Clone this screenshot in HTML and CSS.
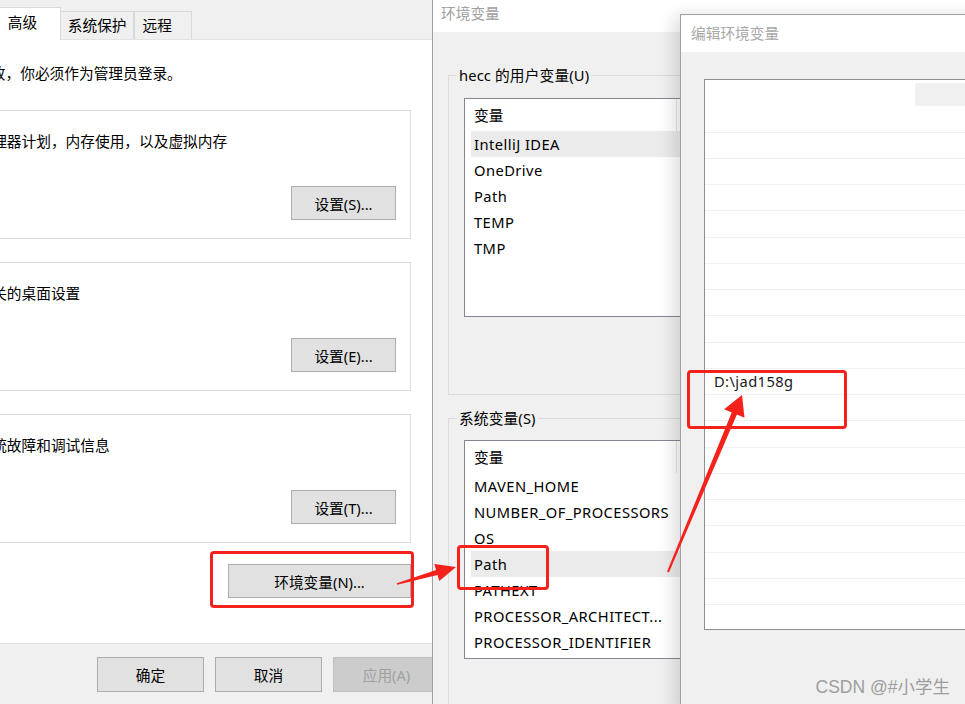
FILE: index.html
```html
<!DOCTYPE html>
<html lang="zh-CN">
<head>
    <meta charset="UTF-8">
    <title>环境变量</title>
    <link rel="stylesheet" href="styles.css">
</head>
<body>
    <!-- 系统属性 -->
    <div class="win sysprop">
        <div class="tabbar">
            <div class="tab">计算机名</div>
            <div class="tab">硬件</div>
            <div class="tab active">高级</div>
            <div class="tab">系统保护</div>
            <div class="tab">远程</div>
        </div>
        <div class="page">
            <p class="note">要进行大多数更改，你必须作为管理员登录。</p>
            <div class="group">
                <div class="group-text">视觉效果，处理器计划，内存使用，以及虚拟内存</div>
                <button class="btn btn-set">设置(S)...</button>
            </div>
            <div class="group">
                <div class="group-text">与登录帐户相关的桌面设置</div>
                <button class="btn btn-set">设置(E)...</button>
            </div>
            <div class="group">
                <div class="group-text">系统启动、系统故障和调试信息</div>
                <button class="btn btn-set">设置(T)...</button>
            </div>
            <button class="btn btn-env">环境变量(N)...</button>
        </div>
        <div class="footer">
            <button class="btn btn-wide">确定</button>
            <button class="btn btn-wide">取消</button>
            <button class="btn btn-wide" disabled>应用(A)</button>
        </div>
    </div>

    <!-- 环境变量 -->
    <div class="win envwin">
        <div class="titlebar">环境变量</div>
        <div class="env-body">
            <fieldset class="vars">
                <legend>hecc 的用户变量(U)</legend>
                <div class="list">
                    <div class="list-head"><span class="col">变量</span></div>
                    <div class="list-row sel">IntelliJ IDEA</div>
                    <div class="list-row">OneDrive</div>
                    <div class="list-row">Path</div>
                    <div class="list-row">TEMP</div>
                    <div class="list-row">TMP</div>
                </div>
            </fieldset>
            <fieldset class="vars vars-sys">
                <legend>系统变量(S)</legend>
                <div class="list">
                    <div class="list-head"><span class="col">变量</span></div>
                    <div class="list-row">MAVEN_HOME</div>
                    <div class="list-row">NUMBER_OF_PROCESSORS</div>
                    <div class="list-row">OS</div>
                    <div class="list-row sel">Path</div>
                    <div class="list-row">PATHEXT</div>
                    <div class="list-row">PROCESSOR_ARCHITECT...</div>
                    <div class="list-row">PROCESSOR_IDENTIFIER</div>
                </div>
            </fieldset>
        </div>
    </div>

    <!-- 编辑环境变量 -->
    <div class="win editwin">
        <div class="titlebar">编辑环境变量</div>
        <div class="edit-body">
            <div class="path-list">
                <div class="path-row editing"><span class="edit-box"></span><span class="edit-fill"></span></div>
                <div class="path-row"></div>
                <div class="path-row"></div>
                <div class="path-row"></div>
                <div class="path-row"></div>
                <div class="path-row"></div>
                <div class="path-row"></div>
                <div class="path-row"></div>
                <div class="path-row"></div>
                <div class="path-row"></div>
                <div class="path-row"></div>
                <div class="path-row">D:\jad158g</div>
                <div class="path-row"></div>
                <div class="path-row"></div>
                <div class="path-row"></div>
                <div class="path-row"></div>
                <div class="path-row"></div>
                <div class="path-row"></div>
                <div class="path-row"></div>
                <div class="path-row"></div>
                <div class="path-row"></div>
            </div>
        </div>
    </div>

    <!-- 标注 -->
    <div class="mark mark-env"></div>
    <div class="mark mark-path"></div>
    <div class="mark mark-value"></div>
    <svg class="arrows" width="965" height="704" viewBox="0 0 965 704">
        <polygon points="396.8,583.2 436.1,570.1 434.3,563.9 456,567 439.3,581.1 437.5,574.9 397.2,584.8"/>
        <polygon points="667.1,571.6 731.7,412.4 724.1,409.3 742,395 744.5,417.7 736.9,414.6 668.9,572.4"/>
    </svg>

    <div class="watermark">CSDN @#小学生</div>
</body>
</html>
```

FILE: styles.css
```css
* {
    box-sizing: border-box;
}

body {
    margin: 0;
    width: 965px;
    height: 704px;
    overflow: hidden;
    position: relative;
    background-color: #ffffff;
    font-family: "Noto Sans", "Noto Sans CJK SC", sans-serif;
    font-size: 14.7px;
    color: #000;
}

.win {
    position: absolute;
    display: flex;
    flex-direction: column;
}

/* 系统属性窗口 */
.sysprop {
    left: -134px;
    top: 0;
    width: 588px;
    height: 704px;
    background-color: #ffffff;
}

.tabbar {
    height: 40px;
    flex: none;
    display: flex;
    align-items: flex-end;
    padding-left: 2px;
    background-color: #f0f0f0;
    border-bottom: 1px solid #e3e3e3;
}

.tab {
    min-width: 58px;
    height: 28px;
    line-height: 27px;
    padding: 0 6px 0 8px;
    border: 1px solid #d9d9d9;
    border-bottom: none;
    white-space: nowrap;
}

.tab.active {
    min-width: 62px;
    height: 33px;
    line-height: 29px;
    margin: 0 -2px -1px;
    background-color: #ffffff;
    position: relative;
}

.page {
    flex: 1;
    display: flex;
    flex-direction: column;
    padding: 23px 43px 0 22px;
}

.note {
    margin: 0;
    line-height: 20px;
    white-space: nowrap;
}

.group {
    height: 129px;
    margin-top: 27px;
    display: flex;
    flex-direction: column;
    padding: 20px 14px 0 15px;
    border: 1px solid #dcdcdc;
}

.group + .group {
    margin-top: 23px;
}

.group-text {
    line-height: 20px;
    white-space: nowrap;
}

.btn {
    font: inherit;
    color: #000;
    background-color: #e1e1e1;
    border: 1px solid #adadad;
    padding: 0;
}

.btn:disabled {
    background-color: #cccccc;
    border-color: #bfbfbf;
    color: #a0a0a0;
}

.btn-set {
    align-self: flex-end;
    width: 105px;
    height: 34px;
    margin-top: 35px;
}

.btn-env {
    align-self: flex-end;
    width: 183px;
    height: 34px;
    margin-top: 21px;
}

.footer {
    height: 61px;
    flex: none;
    display: flex;
    justify-content: flex-end;
    gap: 11px;
    padding: 13px 14px 0 0;
    background-color: #f0f0f0;
    border-top: 1px solid #dfdfdf;
}

.btn-wide {
    width: 107px;
    height: 35px;
}

/* 环境变量窗口 */
.envwin {
    left: 432px;
    top: 0;
    width: 560px;
    height: 704px;
    background-color: #f0f0f0;
    border-left: 1px solid #a0a0a0;
}

.titlebar {
    flex: none;
    background-color: #ffffff;
    color: #a0a0a0;
    white-space: nowrap;
}

.envwin .titlebar {
    height: 32px;
    line-height: 20px;
    padding: 3px 0 0 8px;
}

.env-body {
    padding: 33px 0 0 15px;
}

.vars {
    margin: 0;
    min-width: 0;
    width: 420px;
    padding: 13px 0 77px 0;
    border: 1px solid #dcdcdc;
}

.vars legend {
    margin-left: 8px;
    padding: 0 2px;
    line-height: 20px;
    letter-spacing: 0.15px;
}

.vars-sys {
    margin-top: 13px;
    padding-top: 12px;
}

.list {
    width: 330px;
    height: 219px;
    margin-left: 15px;
    overflow: hidden;
    background-color: #ffffff;
    border: 1px solid #828790;
}

.list-head {
    height: 32px;
    display: flex;
}

.list-head .col {
    width: 212px;
    padding-left: 9px;
    line-height: 32px;
    border-right: 1px solid #e5e5e5;
}

.list-row {
    height: 26px;
    line-height: 26px;
    margin-left: 6px;
    padding-left: 3px;
    letter-spacing: 0.45px;
    white-space: nowrap;
}

.list-row.sel {
    background-color: #ebebeb;
}

/* 编辑环境变量窗口 */
.editwin {
    left: 680px;
    top: 14px;
    width: 320px;
    height: 700px;
    background-color: #f0f0f0;
    border: 1px solid #a0a0a0;
    box-shadow: -6px 2px 16px rgba(0, 0, 0, 0.14);
}

.editwin .titlebar {
    height: 37px;
    line-height: 37px;
    padding-left: 10px;
    color: #a8a8a8;
}

.edit-body {
    padding: 27px 0 0 23px;
}

.path-list {
    width: 300px;
    height: 551px;
    overflow: hidden;
    background-color: #ffffff;
    border: 1px solid #8e8e8e;
}

.path-row {
    height: 26.25px;
    line-height: 25px;
    padding-left: 9px;
    border-bottom: 1px solid #f0f0f0;
    color: #1a1a1a;
    letter-spacing: 0.4px;
    white-space: nowrap;
}

.path-row.editing {
    display: flex;
    padding: 3px 0 0 2px;
    border-bottom: none;
}

.edit-box {
    width: 208px;
    background-color: #ffffff;
}

.edit-fill {
    flex: 1;
    background-color: #f0f0f0;
}

/* 红色标注 */
.mark {
    position: absolute;
    border: 3px solid #f5221b;
    border-radius: 4px;
}

.mark-env {
    left: 210px;
    top: 551px;
    width: 204px;
    height: 57px;
}

.mark-path {
    left: 457px;
    top: 545px;
    width: 92px;
    height: 45px;
}

.mark-value {
    left: 687px;
    top: 370px;
    width: 160px;
    height: 59px;
}

.arrows {
    position: absolute;
    left: 0;
    top: 0;
    pointer-events: none;
}

.arrows polygon {
    fill: #f5221b;
}

.watermark {
    position: absolute;
    right: 15px;
    bottom: 6px;
    font-family: "Liberation Sans", "Noto Sans CJK SC", sans-serif;
    font-size: 17.5px;
    color: #9e9e9e;
}
```
